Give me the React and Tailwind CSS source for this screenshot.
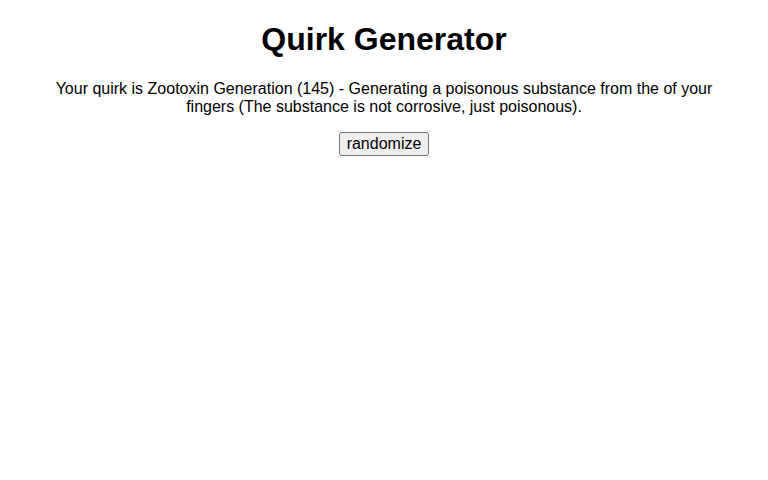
import React, { useState } from 'react';

const quirks = [
    'Zootoxin Generation (145) - Generating a poisonous substance from the of your fingers (The substance is not corrosive, just poisonous).',
];

const App = () => {
    const [quirk, setQuirk] = useState(quirks[0]);

    return (
        <div className="min-h-screen bg-white px-2 text-center font-['Liberation_Sans',Arial,sans-serif] text-black">
            <h1 className="pt-[21px] pb-[22px] text-[32px] leading-[37px] font-bold">Quirk Generator</h1>
            <p className="mx-auto mb-4 max-w-[700px] text-base leading-[18px]">Your quirk is {quirk}</p>
            <button
                onClick={() => setQuirk(quirks[Math.floor(Math.random() * quirks.length)])}
                className="rounded-[3px] border border-[#767676] bg-[#efefef] px-[7px] py-[2px] text-base leading-[18px] text-black"
            >
                randomize
            </button>
        </div>
    );
};

export default App;
